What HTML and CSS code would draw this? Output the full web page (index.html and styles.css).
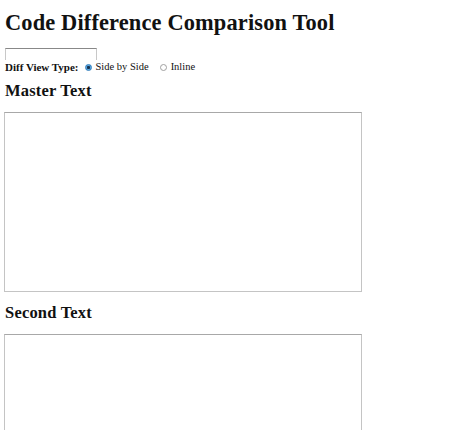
FILE: index.html
```html
<!DOCTYPE html>
<html>
<head>
<meta charset="utf-8">
<link rel="stylesheet" href="styles.css">
</head>
<body>
<h1 class="title">Code Difference Comparison Tool</h1>
<div class="field"><input class="small-input" type="text"></div>
<div class="view-type">
  <span class="label">Diff View Type:</span>
  <label class="opt"><span class="radio checked"></span>Side by Side</label>
  <label class="opt"><span class="radio"></span>Inline</label>
</div>
<h2 class="section">Master Text</h2>
<textarea class="box"></textarea>
<h2 class="section">Second Text</h2>
<textarea class="box"></textarea>
</body>
</html>
```
FILE: styles.css
```css
html, body { background: #fff; }
body {
  margin: 0;
  padding: 0 5px;
  font-family: "Liberation Serif", "Times New Roman", serif;
  color: #111;
}
.title {
  font-size: 22.4px;
  line-height: 22px;
  letter-spacing: 0.15px;
  font-weight: bold;
  margin: 0;
  padding-top: 12px;
}
.field { margin-top: 14px; height: 12px; }
.small-input {
  display: block;
  box-sizing: border-box;
  width: 92px;
  height: 12px;
  margin: 0;
  padding: 0;
  border: 1px solid #c8c8c8;
  border-top-color: #888;
  border-bottom: none;
}
.view-type {
  display: flex;
  align-items: center;
  padding-top: 2px;
  margin-bottom: -2px;
  height: 10px;
  line-height: 10px;
  font-size: 10.5px;
}
.label { font-weight: bold; font-size: 11px; margin-right: 6px; }
.opt { display: flex; align-items: center; margin-right: 11px; }
.radio {
  box-sizing: border-box;
  width: 7px; height: 7px;
  border-radius: 50%;
  border: 1px solid #a0a0a0;
  margin-right: 4px;
  background: #fff;
}
.radio.checked {
  border: 1px solid #2f7dbd;
  background: radial-gradient(circle, #16324f 0 1.3px, #5aa7e0 1.8px);
}
.section {
  font-size: 16.5px;
  line-height: 16px;
  letter-spacing: 0.2px;
  font-weight: bold;
  margin: 13px 0 13px;
}
.box {
  display: block;
  box-sizing: border-box;
  width: 358px;
  height: 180px;
  margin: 0 0 0 -1px;
  padding: 2px;
  border: 1px solid #c4c4c4;
  border-top-color: #a8a8a8;
  resize: none;
}
```
